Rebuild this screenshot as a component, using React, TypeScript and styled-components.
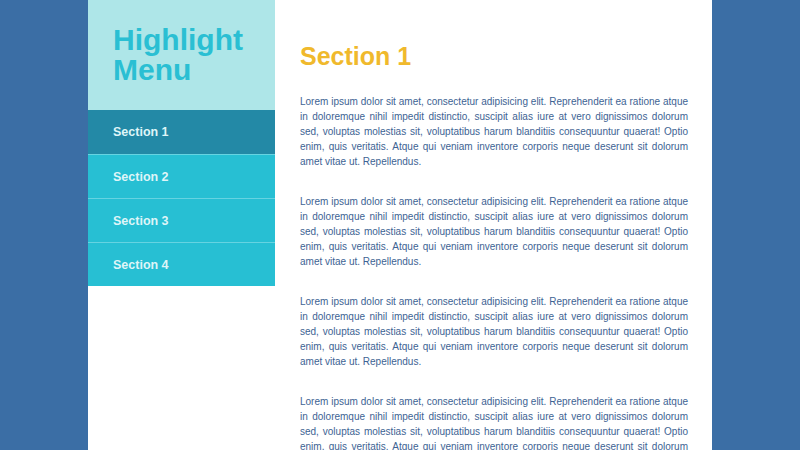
import React from "react";
import styled, { createGlobalStyle } from "styled-components";

const Global = createGlobalStyle`
  html, body { margin: 0; padding: 0; }
  body {
    background: #3b6ea5;
    font-family: "Liberation Sans", Arial, sans-serif;
    height: 450px;
    overflow: hidden;
  }
`;

const Page = styled.div`
  width: 624px;
  margin: 0 auto;
  height: 450px;
  display: flex;
  background: #ffffff;
  overflow: hidden;
`;

const Sidebar = styled.aside`
  width: 187px;
  flex-shrink: 0;
  display: flex;
  flex-direction: column;
`;

const Brand = styled.div`
  height: 110px;
  box-sizing: border-box;
  background: #aee6e8;
  padding: 25px 0 0 25px;
`;

const BrandTitle = styled.h1`
  margin: 0;
  font-size: 30px;
  line-height: 30px;
  font-weight: 700;
  color: #2abfd3;
`;

const Nav = styled.nav`
  display: flex;
  flex-direction: column;
`;

const NavItem = styled.a<{ $active?: boolean }>`
  display: flex;
  align-items: center;
  height: 44px;
  box-sizing: border-box;
  padding-left: 25px;
  font-size: 12.5px;
  font-weight: 700;
  color: #dff5f8;
  text-decoration: none;
  background: ${(p) => (p.$active ? "#2389a6" : "#27bfd3")};
  & + & {
    border-top: 1px solid #66d3e1;
  }
`;

const Main = styled.main`
  flex: 1;
  padding: 40px 24px 0 25px;
`;

const Heading = styled.h2`
  margin: 0 0 22px;
  font-size: 25px;
  line-height: 32px;
  font-weight: 700;
  color: #f0b92c;
`;

const Paragraph = styled.p`
  margin: 0 0 25px;
  font-size: 10px;
  line-height: 15px;
  color: #3d6393;
  text-align: justify;
`;

const lorem =
  "Lorem ipsum dolor sit amet, consectetur adipisicing elit. Reprehenderit ea ratione atque in doloremque nihil impedit distinctio, suscipit alias iure at vero dignissimos dolorum sed, voluptas molestias sit, voluptatibus harum blanditiis consequuntur quaerat! Optio enim, quis veritatis. Atque qui veniam inventore corporis neque deserunt sit dolorum amet vitae ut. Repellendus.";

const sections = ["Section 1", "Section 2", "Section 3", "Section 4"];

export default function App() {
  return (
    <>
      <Global />
      <Page>
        <Sidebar>
          <Brand>
            <BrandTitle>
              Highlight
              <br />
              Menu
            </BrandTitle>
          </Brand>
          <Nav>
            {sections.map((s, i) => (
              <NavItem key={s} href="#" $active={i === 0}>
                {s}
              </NavItem>
            ))}
          </Nav>
        </Sidebar>
        <Main>
          <Heading>Section 1</Heading>
          {[0, 1, 2, 3].map((i) => (
            <Paragraph key={i}>{lorem}</Paragraph>
          ))}
        </Main>
      </Page>
    </>
  );
}
